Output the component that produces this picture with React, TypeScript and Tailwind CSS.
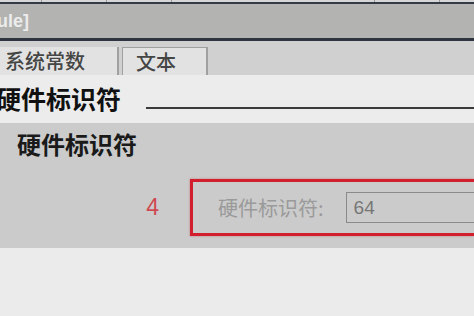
import React from 'react';

const cjk = "font-['Noto_Sans_CJK_SC','Noto_Sans',sans-serif]";

export default function App() {
  return (
    <div className={`w-[474px] h-[316px] overflow-hidden bg-[#ebebeb] ${cjk}`}>
      {/* top toolbar strip */}
      <div className="h-[2px] flex bg-[#d6d6d6]">
        <div className="w-[42px] border-r border-[#9a9a9a]" />
        <div className="w-[65px] border-r border-[#9a9a9a]" />
        <div className="w-[65px] border-r border-[#9a9a9a]" />
        <div className="w-[203px] border-r border-[#9a9a9a]" />
        <div className="w-[65px] border-r border-[#9a9a9a]" />
      </div>
      <div className="h-[2px] bg-[#353a46]" />

      {/* title bar */}
      <div className="h-[37px] bg-[#b3b3b1] flex items-center border-b-[3px] border-[#2f3441]">
        <span className="text-[18px] font-bold text-[#ececec] font-['Liberation_Sans',sans-serif] -ml-[3px] leading-none">
          ule]
        </span>
      </div>

      {/* tabs */}
      <div className="h-[34px] bg-[#cfd0cf] flex items-end">
        <div className="w-[119px] h-[28px] bg-[#e2e2e2] border-r-2 border-[#a0a0a0] flex items-center pl-[5px]">
          <span className="text-[20px] font-medium text-[#454545] leading-none">系统常数</span>
        </div>
        <div className="ml-[3px] w-[86px] h-[28px] bg-[#e2e2e2] border-t border-l border-r-2 border-[#a0a0a0] flex items-center pl-[13px]">
          <span className="text-[20px] font-medium text-[#454545] leading-none">文本</span>
        </div>
      </div>

      {/* section heading */}
      <div className="h-[48px] bg-[#ececec] flex items-start pt-[8px]">
        <span className="text-[25px] font-bold text-[#111] leading-[30px] -ml-[4px]">硬件标识符</span>
        <div className="ml-[25px] mt-[24px] flex-1 h-[2px] bg-[#3a3a3a]" />
      </div>

      {/* gray group */}
      <div className="h-[125px] bg-[#cbcbcb] pt-[6px]">
        <div className="pl-[17px] text-[24px] font-bold text-[#1a1a1a] leading-[30px]">硬件标识符</div>
        <div className="mt-[20px] flex items-center">
          <span className="w-[190px] pr-[31px] text-right text-[23px] text-[#cf4a52] font-['Liberation_Sans',sans-serif] leading-none">
            4
          </span>
          <div className="flex-1 h-[57px] border-[3px] border-r-0 border-[#d21f2d] flex items-center pl-[25px] shadow-[0_0_2px_rgba(210,31,45,0.5)]">
            <span className="text-[20px] text-[#9a9a9a] leading-none">硬件标识符:</span>
            <div className="ml-[22px] flex-1 h-[31px] border border-r-0 border-[#8a8a8a] flex items-center pl-[7px]">
              <span className="text-[19px] text-[#777] font-['Liberation_Sans',sans-serif] leading-none">64</span>
            </div>
          </div>
        </div>
      </div>
    </div>
  );
}
